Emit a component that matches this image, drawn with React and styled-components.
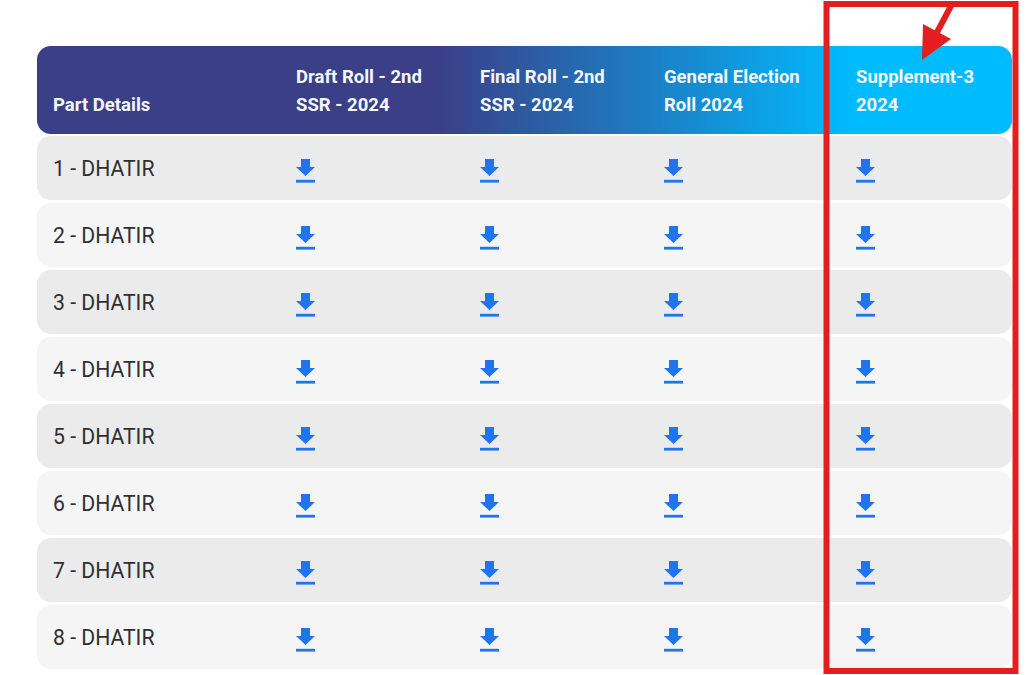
import React from "react";
import styled, { createGlobalStyle } from "styled-components";

const Global = createGlobalStyle`
  html, body { margin: 0; padding: 0; background: #fff; }
  body { font-family: Roboto, "Liberation Sans", sans-serif; }
`;

const columns = "243px 184px 184px 192px 172px";

const Page = styled.div`
  position: relative;
  width: 1036px;
  height: 675px;
  overflow: hidden;
  box-sizing: border-box;
  padding: 46px 24px 0 37px;
`;

const Table = styled.div`
  display: flex;
  flex-direction: column;
  width: 975px;
`;

const HeaderRow = styled.div`
  display: grid;
  grid-template-columns: ${columns};
  align-items: end;
  height: 88px;
  box-sizing: border-box;
  padding-bottom: 15px;
  border-radius: 14px;
  background: linear-gradient(90deg, #3a3f87 0%, #3a3f87 41%, #00bcff 84%, #00bcff 100%);
  color: #f4f7fc;
  font-size: 18.5px;
  font-weight: 700;
  line-height: 28px;
`;

const HeaderCell = styled.div`
  padding: 0 16px;
`;

const Rows = styled.div`
  display: flex;
  flex-direction: column;
  gap: 3px;
  margin-top: 2px;
`;

const Row = styled.div`
  display: grid;
  grid-template-columns: ${columns};
  align-items: center;
  height: 64px;
  border-radius: 14px;
  background: ${(p) => (p.$odd ? "#ebebeb" : "#f5f5f5")};
`;

const PartName = styled.div`
  padding: 0 16px;
  font-size: 21.2px;
  line-height: 28px;
  color: #2f2f33;
  position: relative;
  top: 1px;
`;

const IconCell = styled.div`
  padding: 0 16px;
  height: 24px;
  position: relative;
  top: 3px;
`;

const Download = styled.svg`
  display: block;
  width: 19px;
  height: 24px;
  fill: #1f75ee;
`;

const Overlay = styled.svg`
  position: absolute;
  left: 0;
  top: 0;
  width: 1036px;
  height: 675px;
  pointer-events: none;
`;

const heads = ["Part Details", "Draft Roll - 2nd SSR - 2024", "Final Roll - 2nd SSR - 2024", "General Election Roll 2024", "Supplement-3 2024"];
const parts = [1, 2, 3, 4, 5, 6, 7, 8];

function DownloadIcon() {
  return (
    <Download viewBox="0 0 19 24" aria-hidden="true">
      <path d="M5 0h9v8h5l-9.5 9L0 8h5z" />
      <rect x="0" y="20.8" width="19" height="2.8" />
    </Download>
  );
}

export default function App() {
  return (
    <Page>
      <Global />
      <Table>
        <HeaderRow>
          {heads.map((h) => (
            <HeaderCell key={h}>{h}</HeaderCell>
          ))}
        </HeaderRow>
        <Rows>
          {parts.map((n) => (
            <Row key={n} $odd={n % 2 === 1}>
              <PartName>{n} - DHATIR</PartName>
              {[0, 1, 2, 3].map((c) => (
                <IconCell key={c}>
                  <DownloadIcon />
                </IconCell>
              ))}
            </Row>
          ))}
        </Rows>
      </Table>
      <Overlay viewBox="0 0 1036 675" aria-hidden="true">
        <rect x="826.5" y="4" width="189" height="667" fill="none" stroke="#e41e20" strokeWidth="6" />
        <line x1="952" y1="4" x2="934" y2="38" stroke="#e41e20" strokeWidth="6" />
        <polygon points="922,60 923,24 951,39" fill="#e41e20" />
      </Overlay>
    </Page>
  );
}
